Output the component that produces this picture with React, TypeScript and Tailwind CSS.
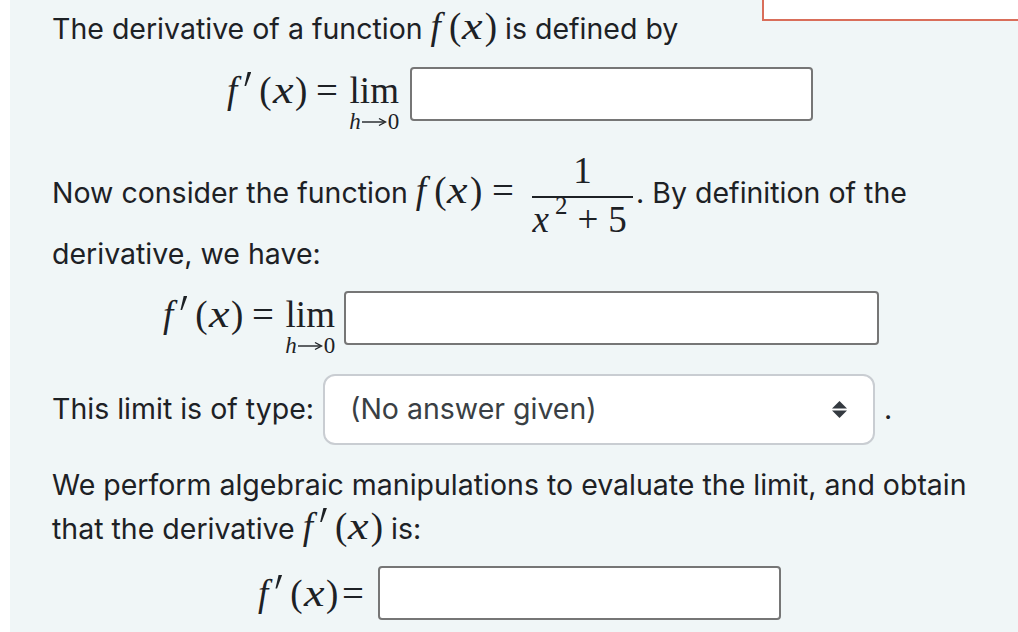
import React from 'react';

const serif = "font-['Liberation_Serif','Times_New_Roman',serif]";

// TeX-style prime: a slanted wedge
function Prime() {
  return (
    <span className="relative -top-[17px] ml-[6px] inline-block h-[14px] w-[8px] bg-[#1d2125] [clip-path:polygon(55%_0,100%_0,35%_100%,15%_100%)]" />
  );
}

function Fx({ prime = false }: { prime?: boolean }) {
  return (
    <span className={`${serif} inline-flex items-baseline text-[37px] leading-none`}>
      <span className="italic">f</span>
      {prime && <Prime />}
      <span className="ml-[8px]">(</span>
      <span className="ml-[1px] inline-block origin-left scale-x-[1.25] italic">x</span>
      <span className="ml-[6px]">)</span>
    </span>
  );
}

function Arrow() {
  return (
    <svg width="25" height="10" viewBox="0 0 25 10" className="mx-[1px] inline-block align-middle">
      <path d="M0 5 H22" stroke="#1d2125" strokeWidth="1.4" />
      <path d="M17 1.5 L23.5 5 L17 8.5" fill="none" stroke="#1d2125" strokeWidth="1.4" />
    </svg>
  );
}

function Lim() {
  return (
    <span className="ml-[12px] flex flex-col items-center">
      <span>lim</span>
      <span className="mt-[1px] flex items-center text-[23px] leading-none">
        <i>h</i>
        <Arrow />
        <span>0</span>
      </span>
    </span>
  );
}

function AnswerBox({ width }: { width: string }) {
  return <div className={`h-[54px] shrink-0 rounded-[4px] border-2 border-[#767676] bg-white ${width}`} />;
}

function Eq({ ml }: { ml: string }) {
  return <span className={`${ml} inline-block origin-left scale-x-[1.05]`}>=</span>;
}

function Fraction() {
  return (
    <span className={`${serif} ml-[19px] mr-[3px] inline-flex flex-col items-center align-middle text-[37px] leading-none`}>
      <span className="pb-[7px]">1</span>
      <span className="h-[2px] w-[101px] bg-[#1d2125]" />
      <span className="flex items-baseline pt-[3px] pr-[6px]">
        <span className="italic">x</span>
        <span className="relative -top-[18px] ml-[6px] text-[25px]">2</span>
        <span className="ml-[10px]">+</span>
        <span className="ml-[10px]">5</span>
      </span>
    </span>
  );
}

function UpDown() {
  return (
    <svg width="15" height="17" viewBox="0 0 15 17" className="shrink-0">
      <path d="M7.5 0 L15 7.5 L0 7.5 Z" fill="#343a40" />
      <path d="M0 9.5 L15 9.5 L7.5 17 Z" fill="#343a40" />
    </svg>
  );
}

export default function App() {
  return (
    <div className="flex h-[632px] w-[1018px] overflow-hidden bg-white font-['Inter',sans-serif] text-[28.5px] text-[#1d2125]">
      <div className="w-[10px] shrink-0" />
      <div className="relative flex-1 overflow-hidden bg-[#f0f6f7] pl-[42px] pt-[7px]">
        {/* clipped panel above */}
        <div className="absolute left-[752px] top-[-40px] h-[61px] w-[300px] border-2 border-[#d96e5a] bg-white" />

        <p className="h-[44px] leading-[44px] whitespace-nowrap">
          The derivative of a function <Fx /> is defined by
        </p>

        <div className="mt-[16px] flex h-[54px] items-start">
          <div className={`${serif} ml-[175px] mt-[5px] flex w-[183px] shrink-0 items-baseline text-[37px] leading-none`}>
            <Fx prime />
            <Eq ml="ml-[9px]" />
            <Lim />
          </div>
          <AnswerBox width="w-[403px]" />
        </div>

        <p className="mt-[31px] leading-[44px] whitespace-nowrap">
          Now consider the function{' '}
          <span className={`${serif} text-[37px] leading-none`}>
            <Fx />
            <Eq ml="ml-[10px]" />
            <Fraction />
          </span>
          . By definition of the
        </p>
        <p className="-mt-[6px] leading-[44px] whitespace-nowrap">derivative, we have:</p>

        <div className="mt-[15px] flex h-[54px] items-start">
          <div className={`${serif} ml-[111px] mt-[5px] flex w-[181px] shrink-0 items-baseline text-[37px] leading-none`}>
            <Fx prime />
            <Eq ml="ml-[9px]" />
            <Lim />
          </div>
          <AnswerBox width="w-[535px]" />
        </div>

        <div className="mt-[29px] flex h-[71px] items-center whitespace-nowrap">
          <span className="w-[271px] shrink-0">This limit is of type:</span>
          <div className="flex h-[71px] w-[552px] shrink-0 items-center justify-between rounded-[12px] border-2 border-[#c9cdd2] bg-white pl-[25px] pr-[26px] text-[#3a3f44]">
            <span>(No answer given)</span>
            <UpDown />
          </div>
          <span className="ml-[9px]">.</span>
        </div>

        <p className="mt-[18px] leading-[44px] whitespace-nowrap">
          We perform algebraic manipulations to evaluate the limit, and obtain
        </p>
        <p className="leading-[44px] whitespace-nowrap">
          that the derivative <Fx prime /> is:
        </p>

        <div className="mt-[15px] flex h-[54px] items-center">
          <div className={`${serif} ml-[206px] flex w-[120px] shrink-0 items-baseline text-[37px] leading-none`}>
            <Fx prime />
            <Eq ml="ml-[4px]" />
          </div>
          <AnswerBox width="w-[403px]" />
        </div>
      </div>
    </div>
  );
}
